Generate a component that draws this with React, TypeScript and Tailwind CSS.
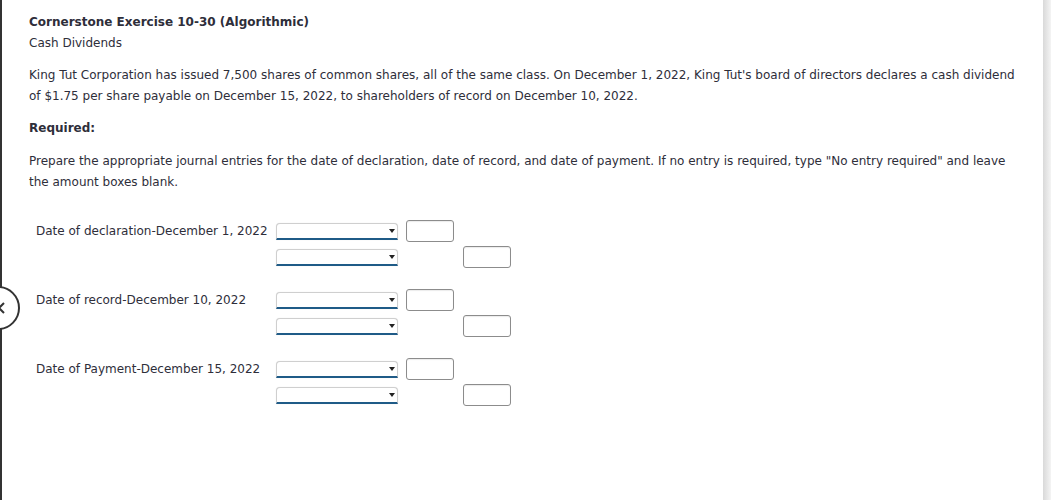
import React from "react";

const Select: React.FC = () => (
  <div className="relative h-[17px] w-[122px] rounded-t-[4px] border border-b-2 border-[#cfcfcf] border-b-[#1f5b87] bg-white shadow-[0_0_1px_rgba(0,0,0,0.15)]">
    <div className="absolute right-[2px] top-[5px] h-0 w-0 border-x-[3.5px] border-t-[4px] border-x-transparent border-t-[#222]"></div>
  </div>
);

const Amount: React.FC = () => (
  <div className="h-[22px] w-[48px] rounded-[3px] border border-[#8c8c8c] bg-white shadow-[inset_0_1px_1px_rgba(0,0,0,0.08)]"></div>
);

interface EntryProps {
  label: string;
}

const EntryGroup: React.FC<EntryProps> = ({ label }) => (
  <div className="flex flex-col">
    <div className="flex h-[26px] items-center">
      <div className="w-[240px] shrink-0 whitespace-nowrap">{label}</div>
      <Select />
      <div className="ml-[8px]">
        <Amount />
      </div>
    </div>
    <div className="flex h-[26px] items-center">
      <div className="w-[240px] shrink-0"></div>
      <Select />
      <div className="ml-[65px]">
        <Amount />
      </div>
    </div>
  </div>
);

export default function App() {
  return (
    <div className="relative h-[500px] w-[1051px] overflow-hidden bg-white font-['DejaVu_Sans',Verdana,sans-serif] text-[12px] leading-[21px] text-[#2e2e3a]">
      <div className="flex h-full">
        <div className="h-full grow border-l-2 border-[#333] pl-[27px] pt-[12px]">
          <div className="font-bold">Cornerstone Exercise 10-30 (Algorithmic)</div>
          <div>Cash Dividends</div>
          <p className="mt-[11px] pr-[23px]">
            King Tut Corporation has issued 7,500 shares of common shares, all of the same class. On December 1, 2022, King Tut's board of directors declares a cash dividend of $1.75 per share payable on December 15, 2022, to shareholders of record on December 10, 2022.
          </p>
          <p className="mt-[11px] font-bold">Required:</p>
          <p className="mt-[12px] pr-[23px]">
            Prepare the appropriate journal entries for the date of declaration, date of record, and date of payment. If no entry is required, type "No entry required" and leave the amount boxes blank.
          </p>
          <div className="mt-[25px] flex flex-col gap-[17px] pl-[7px]">
            <EntryGroup label="Date of declaration-December 1, 2022" />
            <EntryGroup label="Date of record-December 10, 2022" />
            <EntryGroup label="Date of Payment-December 15, 2022" />
          </div>
        </div>
        <div className="h-full w-[8px] shrink-0 bg-gradient-to-r from-[#d9d9d9] to-[#f4f4f4]"></div>
      </div>
      <div className="absolute left-[-24px] top-[286px] flex h-[44px] w-[44px] items-center justify-end rounded-full border-[2px] border-[#333] bg-white pr-[13px]">
        <svg width="7" height="12" viewBox="0 0 7 12" fill="none" stroke="#333" strokeWidth="2">
          <path d="M6 1 L1 6 L6 11" />
        </svg>
      </div>
    </div>
  );
}
